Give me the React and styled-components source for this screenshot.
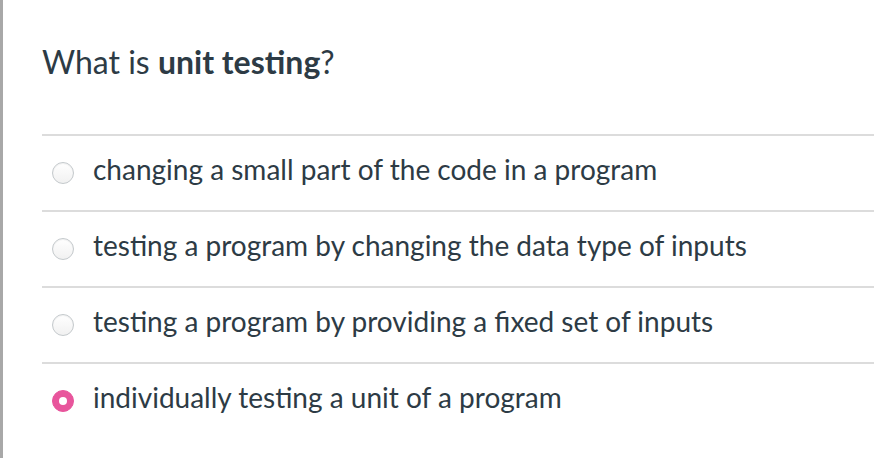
import styled, { createGlobalStyle } from 'styled-components';

const GlobalStyle = createGlobalStyle`
  html, body {
    margin: 0;
    padding: 0;
    background: #fff;
  }
  body {
    font-family: Lato, "Noto Sans", sans-serif;
    color: #2d3b45;
  }
`;

const Page = styled.div`
  height: 458px;
  box-sizing: border-box;
  border-left: 3px solid #a8a8a8;
  padding: 43px 10px 0 39px;
  overflow: hidden;
`;

const Question = styled.h1`
  margin: 0 0 53px;
  font-size: 32px;
  font-weight: 400;
  line-height: 38px;

  strong {
    font-weight: 700;
  }
`;

const AnswerList = styled.ul`
  list-style: none;
  margin: 0;
  padding: 0;
`;

const Answer = styled.li`
  display: flex;
  align-items: center;
  box-sizing: border-box;
  height: 76px;
  border-top: 2px solid #dcdcdc;
  padding: 0 0 6px 10px;
  font-size: 28px;
  line-height: 1.2;
`;

const Radio = styled.span`
  flex: none;
  width: 22px;
  height: 22px;
  box-sizing: border-box;
  border-radius: 50%;
  margin: 6px 19px 0 0;
  position: relative;
  background: ${p => (p.checked ? '#e8559c' : 'linear-gradient(#fff, #f1f1f1)')};
  border: 1px solid ${p => (p.checked ? '#e8559c' : '#c4c9cc')};
  box-shadow: ${p => (p.checked ? 'none' : 'inset 0 1px 1px rgba(0,0,0,0.06)')};

  &::after {
    content: '';
    display: ${p => (p.checked ? 'block' : 'none')};
    position: absolute;
    top: 50%;
    left: 50%;
    width: 8px;
    height: 8px;
    border-radius: 50%;
    background: #fff;
    transform: translate(-50%, -50%);
  }
`;

const answers = [
  { text: 'changing a small part of the code in a program', checked: false },
  { text: 'testing a program by changing the data type of inputs', checked: false },
  { text: 'testing a program by providing a fixed set of inputs', checked: false },
  { text: 'individually testing a unit of a program', checked: true },
];

const App = () => (
  <>
    <GlobalStyle />
    <Page>
      <Question>
        What is <strong>unit testing</strong>?
      </Question>
      <AnswerList>
        {answers.map(a => (
          <Answer key={a.text}>
            <Radio checked={a.checked} />
            {a.text}
          </Answer>
        ))}
      </AnswerList>
    </Page>
  </>
);

export default App;
